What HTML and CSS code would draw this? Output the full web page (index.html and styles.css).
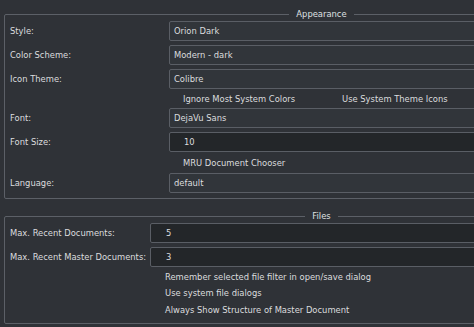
FILE: index.html
```html
<!DOCTYPE html>
<html lang="en">
<head>
    <meta charset="UTF-8">
    <meta name="viewport" content="width=device-width, initial-scale=1.0">
    <title>Preferences - Appearance</title>
    <link rel="stylesheet" href="styles.css">
</head>
<body>
    <div class="page">
        <fieldset class="group appearance">
            <legend>Appearance</legend>
            <div class="form">
                <div class="label">Style:</div>
                <div class="field">Orion Dark</div>
                <div class="label">Color Scheme:</div>
                <div class="field">Modern - dark</div>
                <div class="label">Icon Theme:</div>
                <div class="field">Colibre</div>
                <div></div>
                <div class="check-row">
                    <span class="check">Ignore Most System Colors</span>
                    <span class="check">Use System Theme Icons</span>
                </div>
                <div class="label">Font:</div>
                <div class="field">DejaVu Sans</div>
                <div class="label">Font Size:</div>
                <div class="field spin">10</div>
                <div></div>
                <div class="check-row tall"><span class="check">MRU Document Chooser</span></div>
                <div class="label">Language:</div>
                <div class="field">default</div>
            </div>
        </fieldset>

        <fieldset class="group files">
            <legend>Files</legend>
            <div class="form">
                <div class="label">Max. Recent Documents:</div>
                <div class="field spin">5</div>
                <div class="label">Max. Recent Master Documents:</div>
                <div class="field spin">3</div>
                <div></div>
                <div class="check-list">
                    <span class="check">Remember selected file filter in open/save dialog</span>
                    <span class="check">Use system file dialogs</span>
                    <span class="check">Always Show Structure of Master Document</span>
                </div>
            </div>
        </fieldset>
    </div>
</body>
</html>
```

FILE: styles.css
```css
* {
    margin: 0;
    padding: 0;
    box-sizing: border-box;
}

body {
    font-family: "DejaVu Sans", sans-serif;
    font-size: 8.4px;
    color: #dcdddf;
    background-color: #2f3237;
    overflow: hidden;
    height: 100vh;
}

.page {
    width: 640px;
    padding-left: 4px;
}

.group {
    border: 1px solid #5c6067;
    border-radius: 2px;
    padding: 0 6px 0 5px;
}

.group legend {
    margin: 0 auto;
    padding: 0 7px;
    color: #dfe0e2;
    line-height: 11px;
}

.appearance {
    margin-top: 9px;
    padding-bottom: 5px;
}

.files {
    margin-top: 12px;
    padding-bottom: 5px;
}

.form {
    display: grid;
    grid-template-columns: 159px 1fr;
    row-gap: 4px;
    padding-top: 1px;
}

.files .form {
    grid-template-columns: 140px 1fr;
}

.label {
    display: flex;
    align-items: center;
    height: 20px;
}

.field {
    height: 20px;
    display: flex;
    align-items: center;
    padding-left: 4px;
    border: 1px solid #5a5e65;
    border-radius: 2px;
    background-color: #31353a;
}

.field.spin {
    background-color: #232629;
    padding-left: 14px;
}

.files .field.spin {
    padding-left: 15px;
}

.check-row {
    display: flex;
    height: 11px;
    align-items: center;
    padding-left: 14px;
}

.check-row.tall {
    height: 13px;
}

.check-row .check {
    width: 159px;
}

.check-list {
    display: flex;
    flex-direction: column;
    margin-top: -2px;
    padding-left: 15px;
}

.check-list .check {
    height: 16.25px;
    display: flex;
    align-items: center;
}
```
